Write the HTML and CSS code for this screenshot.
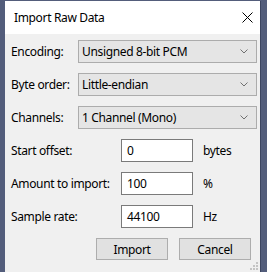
FILE: index.html
```html
<!DOCTYPE html>
<html>
<head>
<meta charset="utf-8">
<link rel="stylesheet" href="styles.css">
</head>
<body>
<div class="window">
  <div class="titlebar">
    <span class="title">Import Raw Data</span>
    <svg class="close" width="11" height="11" viewBox="0 0 11 11"><path d="M0.5 0.5 L10.5 10.5 M10.5 0.5 L0.5 10.5" stroke="#000" stroke-width="1" fill="none"/></svg>
  </div>
  <div class="content">
    <div class="row combo-row">
      <span class="label">Encoding:</span>
      <div class="combo"><span>Unsigned 8-bit PCM</span><svg class="chev" width="8" height="5" viewBox="0 0 8 5"><path d="M0.5 0.5 L4 4 L7.5 0.5" stroke="#707070" fill="none"/></svg></div>
    </div>
    <div class="row combo-row">
      <span class="label">Byte order:</span>
      <div class="combo"><span>Little-endian</span><svg class="chev" width="8" height="5" viewBox="0 0 8 5"><path d="M0.5 0.5 L4 4 L7.5 0.5" stroke="#707070" fill="none"/></svg></div>
    </div>
    <div class="row combo-row">
      <span class="label">Channels:</span>
      <div class="combo"><span>1 Channel (Mono)</span><svg class="chev" width="8" height="5" viewBox="0 0 8 5"><path d="M0.5 0.5 L4 4 L7.5 0.5" stroke="#707070" fill="none"/></svg></div>
    </div>
    <div class="row input-row">
      <span class="label">Start offset:</span>
      <div class="field">0</div>
      <span class="unit">bytes</span>
    </div>
    <div class="row input-row">
      <span class="label">Amount to import:</span>
      <div class="field">100</div>
      <span class="unit">%</span>
    </div>
    <div class="row input-row">
      <span class="label">Sample rate:</span>
      <div class="field">44100</div>
      <span class="unit">Hz</span>
    </div>
    <div class="buttons">
      <div class="btn">Import</div>
      <div class="btn">Cancel</div>
    </div>
  </div>
  <svg class="grip" width="8" height="8" viewBox="0 0 8 8">
    <rect x="6" y="0" width="2" height="2" fill="#c4c4c4"/>
    <rect x="3" y="3" width="2" height="2" fill="#c4c4c4"/>
    <rect x="6" y="3" width="2" height="2" fill="#c4c4c4"/>
    <rect x="0" y="6" width="2" height="2" fill="#c4c4c4"/>
    <rect x="3" y="6" width="2" height="2" fill="#c4c4c4"/>
    <rect x="6" y="6" width="2" height="2" fill="#c4c4c4"/>
  </svg>
</div>
</body>
</html>
```
FILE: styles.css
```css
html, body {
  margin: 0;
  padding: 0;
}
body {
  background: #535d7b;
  width: 267px;
  height: 272px;
  overflow: hidden;
  font-family: "Noto Sans", "Open Sans", sans-serif;
  font-size: 12px;
  letter-spacing: -0.35px;
  color: #000;
}
.window {
  position: relative;
  margin: 1px 0 0 5px;
  width: 256px;
  height: 271px;
  background: #f0f0f0;
  border-right: 1px solid #3c4560;
  box-sizing: border-box;
}
.titlebar {
  height: 32px;
  background: #fff;
  display: flex;
  align-items: center;
  justify-content: space-between;
  padding: 0 7px 1px 9px;
}
.title {
  font-size: 12px;
}
.close {
  display: block;
}
.content {
  padding: 6px 3px 0 6px;
}
.row {
  height: 23px;
  margin-bottom: 10px;
  display: grid;
  align-items: center;
}
.combo-row {
  grid-template-columns: 67px 179px;
}
.input-row {
  grid-template-columns: 110px 72px auto;
}
.combo {
  height: 23px;
  box-sizing: border-box;
  background: #e5e5e5;
  border: 1px solid #acacac;
  display: flex;
  align-items: center;
  justify-content: space-between;
  padding: 0 8px 0 3px;
}
.chev {
  display: block;
}
.field {
  height: 23px;
  box-sizing: border-box;
  background: #fff;
  border: 1px solid #7a7a7a;
  display: flex;
  align-items: center;
  padding-left: 5px;
}
.unit {
  padding-left: 10px;
}
.buttons {
  display: flex;
  gap: 11px;
  padding-left: 85px;
  margin-top: 3px;
}
.btn {
  width: 72px;
  height: 22px;
  box-sizing: border-box;
  background: #e1e1e1;
  border: 1px solid #adadad;
  display: flex;
  align-items: center;
  justify-content: center;
}
.grip {
  position: absolute;
  right: 2px;
  bottom: 2px;
}
```
